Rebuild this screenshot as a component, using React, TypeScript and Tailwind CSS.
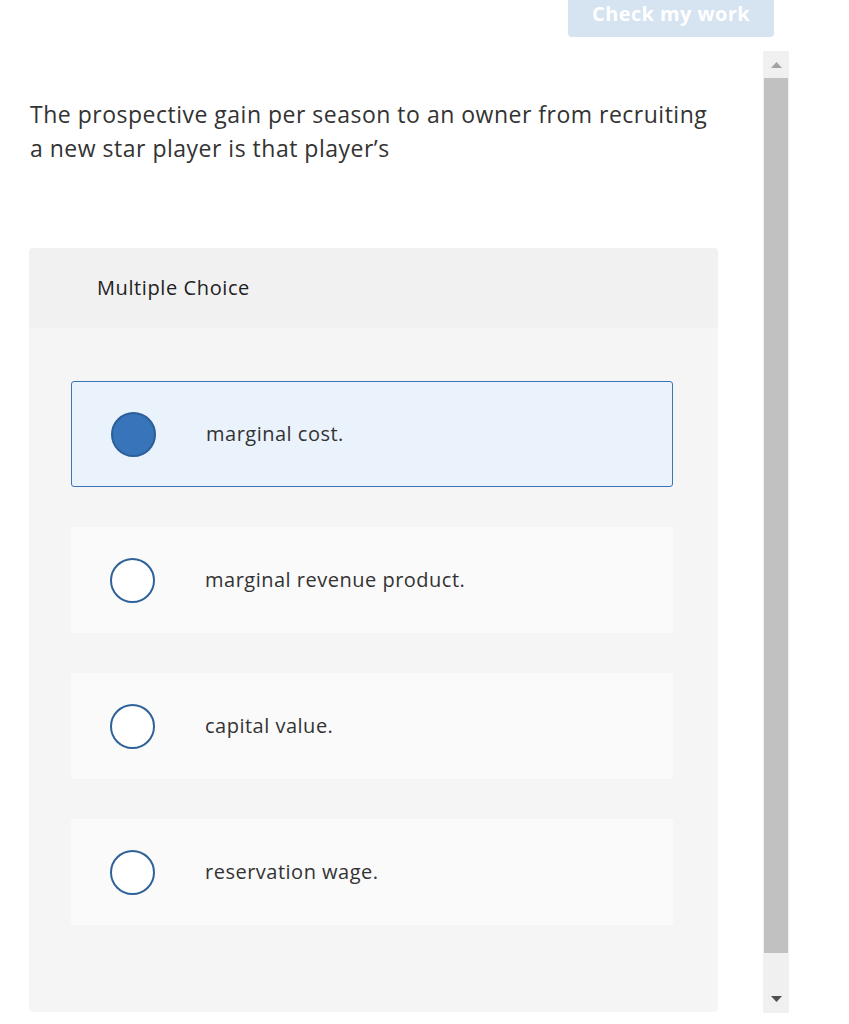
import React from 'react';

const options = [
  { id: 'a', label: 'marginal cost.', selected: true },
  { id: 'b', label: 'marginal revenue product.', selected: false },
  { id: 'c', label: 'capital value.', selected: false },
  { id: 'd', label: 'reservation wage.', selected: false },
];

function Radio({ checked }: { checked: boolean }) {
  return (
    <span
      className={`block h-[45px] w-[45px] shrink-0 rounded-full border-2 ${
        checked ? 'border-[#2b5f99] bg-[#3874b9]' : 'border-[#2f6299] bg-white'
      }`}
    />
  );
}

export default function App() {
  return (
    <div
      className="h-[1024px] w-[849px] overflow-hidden bg-white text-[#333]"
      style={{ fontFamily: '"Open Sans", "Liberation Sans", sans-serif' }}
    >
      <div className="flex justify-end pr-[75px]">
        <button className="h-[37px] w-[206px] rounded-b-[4px] bg-[#d6e3f1] pb-[10px] text-[20px] font-bold leading-[26px] tracking-[0.4px] text-white">
          Check my work
        </button>
      </div>

      <div className="mt-[14px] flex">
        <div className="w-[763px] pt-[46px]">
          <p className="w-[720px] pl-[30px] text-[23px] leading-[34px] tracking-[0.5px] text-[#333]">
            The prospective gain per season to an owner from recruiting a new star player is that player’s
          </p>

          <div className="ml-[29px] mt-[83px] w-[689px] rounded-[4px] bg-[#f5f5f5] pb-[87px]">
            <div className="flex h-[80px] items-center rounded-t-[4px] bg-[#f1f1f1] pl-[68px] text-[20px] tracking-[0.6px] text-[#222]">
              Multiple Choice
            </div>
            <div className="ml-[42px] mt-[53px] flex w-[602px] flex-col gap-[40px]">
              {options.map((o) => (
                <label
                  key={o.id}
                  className={`flex h-[106px] items-center rounded-[3px] pl-[39px] ${
                    o.selected ? 'border border-[#3b73b9] bg-[#eaf2fc]' : 'bg-[#fafafa]'
                  }`}
                >
                  <Radio checked={o.selected} />
                  <span className="ml-[50px] text-[20px] tracking-[0.5px] text-[#333]">{o.label}</span>
                </label>
              ))}
            </div>
          </div>
        </div>

        <div className="flex h-[962px] w-[26px] flex-col bg-[#f0f0f0]">
          <div className="flex h-[27px] items-center justify-center">
            <svg width="11" height="6" viewBox="0 0 11 6">
              <path d="M5.5 0 L11 6 L0 6 Z" fill="#a3a3a3" />
            </svg>
          </div>
          <div className="mx-[1px] flex-1 bg-[#c1c1c1]" />
          <div className="flex h-[60px] items-end justify-center pb-[11px]">
            <svg width="11" height="6" viewBox="0 0 11 6">
              <path d="M0 0 L11 0 L5.5 6 Z" fill="#505050" />
            </svg>
          </div>
        </div>
      </div>
    </div>
  );
}
